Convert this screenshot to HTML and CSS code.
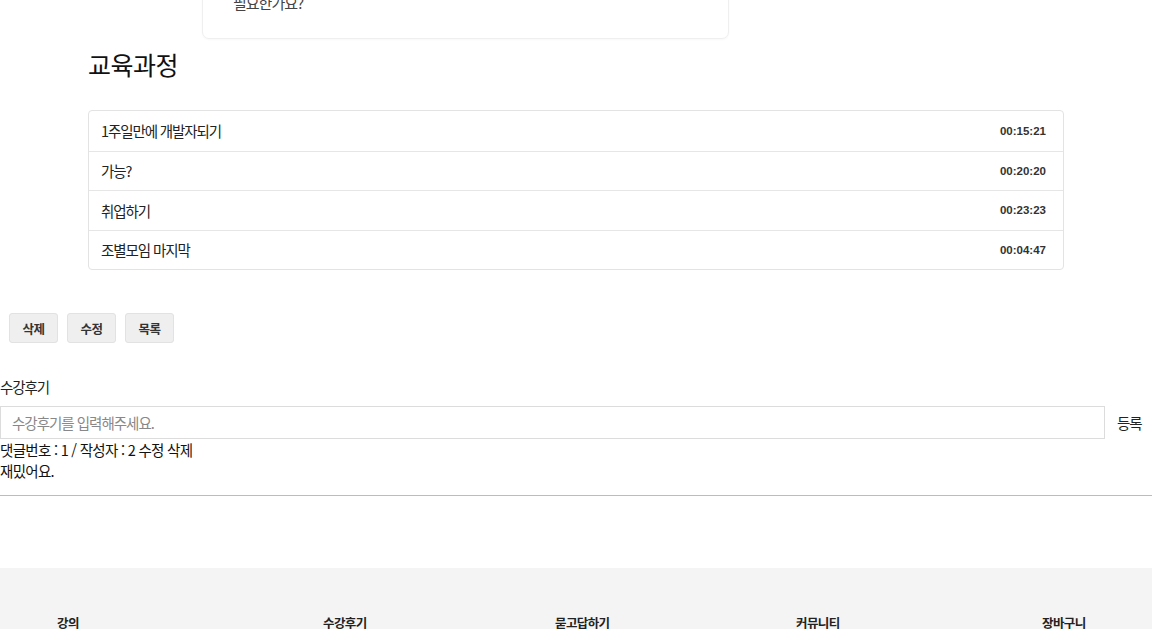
FILE: index.html
```html
<!DOCTYPE html>
<html lang="ko">
<head>
<meta charset="utf-8">
<title>강의 상세</title>
<link rel="stylesheet" href="styles.css">
</head>
<body>
<div class="top-wrap">
  <div class="qa-card">
    <p class="qa-text">필요한가요?</p>
  </div>
</div>

<section class="curriculum">
  <h2 class="cur-title">교육과정</h2>
  <ul class="cur-list">
    <li class="cur-item"><span class="cur-name">1주일만에 개발자되기</span><span class="cur-time">00:15:21</span></li>
    <li class="cur-item"><span class="cur-name">가능?</span><span class="cur-time">00:20:20</span></li>
    <li class="cur-item"><span class="cur-name">취업하기</span><span class="cur-time">00:23:23</span></li>
    <li class="cur-item"><span class="cur-name">조별모임 마지막</span><span class="cur-time">00:04:47</span></li>
  </ul>
</section>

<div class="actions">
  <button class="btn">삭제</button>
  <button class="btn">수정</button>
  <button class="btn">목록</button>
</div>

<section class="reviews">
  <div class="rev-label">수강후기</div>
  <div class="rev-form">
    <input class="rev-input" type="text" placeholder="수강후기를 입력해주세요.">
    <span class="rev-submit">등록</span>
  </div>
  <div class="rev-meta">댓글번호 : 1 / 작성자 : 2 수정 삭제</div>
  <div class="rev-body">재밌어요.</div>
  <hr class="rev-hr">
</section>

<footer class="footer">
  <div class="foot-grid">
    <div class="foot-col">강의</div>
    <div class="foot-col">수강후기</div>
    <div class="foot-col">묻고답하기</div>
    <div class="foot-col">커뮤니티</div>
    <div class="foot-col">장바구니</div>
  </div>
</footer>
</body>
</html>
```

FILE: styles.css
```css
* { box-sizing: border-box; }
html, body {
  margin: 0;
  padding: 0;
  background: #fff;
  color: #222;
  font-family: "Noto Sans CJK KR", "Noto Sans", sans-serif;
}
.top-wrap {
  padding-left: 202px;
}
.qa-card {
  width: 527px;
  margin-top: -10px;
  padding: 0 30px 23px;
  border: 1px solid #efefef;
  border-radius: 7px;
  box-shadow: 0 1px 2px rgba(0,0,0,0.03);
}
.qa-text {
  margin: 0;
  font-size: 15px;
  line-height: 24px;
  letter-spacing: -1px;
  color: #444;
}
.curriculum {
  width: 976px;
  margin: 0 auto;
}
.cur-title {
  margin: 8px 0 0;
  font-size: 25px;
  line-height: 34px;
  font-weight: 400;
  letter-spacing: -0.5px;
  color: #111;
}
.cur-list {
  list-style: none;
  margin: 29px 0 0;
  padding: 0;
  border: 1px solid #e3e3e3;
  border-radius: 4px;
}
.cur-item {
  display: flex;
  justify-content: space-between;
  align-items: center;
  height: 39.5px;
  padding: 0 17px 0 12px;
  border-top: 1px solid #e6e6e6;
}
.cur-item:first-child { border-top: none; }
.cur-name {
  font-size: 14.5px;
  letter-spacing: -1.1px;
  color: #222;
}
.cur-time {
  font-family: "Liberation Sans", Arial, sans-serif;
  font-size: 11.5px;
  font-weight: 700;
  color: #333;
}
.actions {
  display: flex;
  gap: 9px;
  padding-left: 9px;
  margin-top: 43px;
}
.btn {
  width: 49px;
  height: 30px;
  padding: 0;
  background: #efefef;
  border: 1px solid #e2e2e2;
  border-radius: 3px;
  font-family: inherit;
  font-size: 12.5px;
  font-weight: 700;
  letter-spacing: -0.5px;
  color: #333;
}
.reviews {
  margin-top: 33px;
}
.rev-label {
  font-size: 14.5px;
  line-height: 22px;
  letter-spacing: -1.1px;
  color: #222;
}
.rev-form {
  display: flex;
  align-items: center;
  margin-top: 8px;
}
.rev-input {
  width: 1105px;
  height: 33px;
  padding: 0 11px;
  border: 1px solid #dcdcdc;
  font-family: inherit;
  font-size: 14.5px;
  letter-spacing: -1px;
  color: #222;
  outline: none;
}
.rev-input::placeholder { color: #888; }
.rev-submit {
  margin-left: 12px;
  font-size: 14.5px;
  letter-spacing: -1px;
  color: #222;
}
.rev-meta, .rev-body {
  font-size: 14.5px;
  line-height: 21px;
  letter-spacing: -0.7px;
  color: #111;
}
.rev-hr {
  margin: 14px 0 0;
  border: none;
  border-top: 1px solid #bcbcbc;
}
.footer {
  margin-top: 72px;
  background: #f4f4f4;
  height: 120px;
  padding-top: 45px;
}
.foot-grid {
  display: grid;
  grid-template-columns: 266px 232px 241px 246px auto;
  padding-left: 57px;
}
.foot-col {
  font-size: 12.5px;
  font-weight: 700;
  letter-spacing: -0.6px;
  color: #222;
}
```
